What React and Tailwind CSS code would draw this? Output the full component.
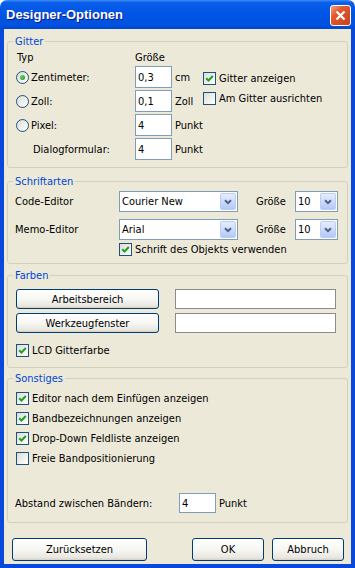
import React from "react";

const ui = "font-[family-name:'DejaVu_Sans_Condensed','Liberation_Sans',sans-serif]";

function Radio({ checked }) {
  return (
    <span className="flex h-[13px] w-[13px] shrink-0 items-center justify-center rounded-full border border-[#1c5180] bg-[linear-gradient(135deg,#dcdcd7,#ffffff)]">
      {checked && <span className="h-[5px] w-[5px] rounded-full bg-[radial-gradient(circle_at_35%_35%,#5fd35f,#1c9a1c)]" />}
    </span>
  );
}

function Check({ checked }) {
  return (
    <span className="flex h-[13px] w-[13px] shrink-0 items-center justify-center border border-[#1c5180] bg-[linear-gradient(135deg,#dcdcd7,#ffffff)]">
      {checked && (
        <svg width="9" height="9" viewBox="0 0 9 9">
          <path d="M1.2 4.2 L3.5 6.5 L7.8 2" fill="none" stroke="#21a121" strokeWidth="2" />
        </svg>
      )}
    </span>
  );
}

function CheckRow({ checked, children, className = "" }) {
  return (
    <div className={`flex h-[13px] items-center ${className}`}>
      <Check checked={checked} />
      <span className="ml-[3px] whitespace-nowrap">{children}</span>
    </div>
  );
}

function Field({ value, className = "" }) {
  return (
    <div className={`flex shrink-0 items-center border border-[#7f9db9] bg-white pl-[2px] ${className}`}>
      {value}
    </div>
  );
}

function Combo({ value, className = "" }) {
  return (
    <div className={`flex h-[21px] shrink-0 items-stretch border border-[#7f9db9] bg-white ${className}`}>
      <span className="flex flex-1 items-center pl-[2px] whitespace-nowrap">{value}</span>
      <span className="m-[1px] flex w-[16px] items-center justify-center rounded-[2px] border border-[#b9cdf8] bg-[linear-gradient(180deg,#e6eefd,#b4c8f6)]">
        <svg width="8" height="6" viewBox="0 0 8 6">
          <path d="M1 1.2 L4 4.2 L7 1.2" fill="none" stroke="#4d6185" strokeWidth="2" />
        </svg>
      </span>
    </div>
  );
}

function Btn({ children, className = "" }) {
  return (
    <button className={`shrink-0 rounded-[3px] border border-[#003c74] bg-[linear-gradient(180deg,#ffffff_0%,#f5f5f1_55%,#e8e7e0_88%,#d6d0c5_100%)] text-black ${className}`}>
      {children}
    </button>
  );
}

function Group({ title, className = "", children }) {
  return (
    <div className={`shrink-0 rounded-[3px] border border-[#d0d0bf] ${className}`}>
      <div className="-mt-[7px] ml-[5px] w-fit bg-[#ece9d8] px-[2px] leading-[13px] text-[#0046d5]">{title}</div>
      {children}
    </div>
  );
}

function GridRow({ label, value, unit }) {
  return (
    <div className="mt-[2px] flex h-[22px] items-center">
      <div className="flex w-[119px] items-center">{label}</div>
      <Field value={value} className="h-[22px] w-[37px]" />
      <span className="ml-[3px]">{unit}</span>
    </div>
  );
}

export default function App() {
  return (
    <div className={`flex h-[568px] w-[355px] flex-col text-[11px] leading-[13px] text-black ${ui}`}>
      {/* title bar */}
      <div className="flex h-[29px] shrink-0 items-center rounded-t-[7px] bg-[linear-gradient(180deg,#3c8df5_0%,#0a5eea_9%,#0055e5_45%,#0052e0_85%,#0146d0_100%)] pl-[6px] pr-[4px]">
        <span className="flex-1 font-[family-name:'Liberation_Sans',sans-serif] text-[13px] font-bold text-white [text-shadow:1px_1px_#0a1883]">
          Designer-Optionen
        </span>
        <span className="mt-[1px] flex h-[21px] w-[21px] items-center justify-center rounded-[3px] border border-white bg-[linear-gradient(135deg,#f0a080_0%,#e2572e_35%,#c8401a_100%)]">
          <svg width="11" height="11" viewBox="0 0 11 11">
            <path d="M1.5 1.5 L9.5 9.5 M9.5 1.5 L1.5 9.5" stroke="#fff" strokeWidth="2.2" />
          </svg>
        </span>
      </div>

      <div className="flex flex-1 flex-col border-x-4 border-b-4 border-[#0848db] bg-[#ece9d8] px-[3px]">
        <Group title="Gitter" className="mt-[12px] h-[127px]">
          <div className="flex pl-[8px]">
            <div className="w-[187px]">
              <div className="mt-[3px] flex h-[13px]">
                <span className="w-[119px] pl-[1px]">Typ</span>
                <span>Größe</span>
              </div>
              <GridRow
                label={<><Radio checked /><span className="ml-[2px]">Zentimeter:</span></>}
                value="0,3"
                unit="cm"
              />
              <GridRow label={<><Radio /><span className="ml-[2px]">Zoll:</span></>} value="0,1" unit="Zoll" />
              <GridRow label={<><Radio /><span className="ml-[2px]">Pixel:</span></>} value="4" unit="Punkt" />
              <GridRow label={<span className="pl-[17px]">Dialogformular:</span>} value="4" unit="Punkt" />
            </div>
            <div className="pt-[24px]">
              <CheckRow checked>Gitter anzeigen</CheckRow>
              <CheckRow className="mt-[7px]">Am Gitter ausrichten</CheckRow>
            </div>
          </div>
        </Group>

        <Group title="Schriftarten" className="mt-[13px] h-[83px]">
          <div className="pl-[7px]">
            <div className="mt-[3px] flex h-[21px] items-center">
              <span className="w-[104px]">Code-Editor</span>
              <Combo value="Courier New" className="w-[119px]" />
              <span className="ml-[18px] w-[39px]">Größe</span>
              <Combo value="10" className="w-[43px]" />
            </div>
            <div className="mt-[7px] flex h-[21px] items-center">
              <span className="w-[104px]">Memo-Editor</span>
              <Combo value="Arial" className="w-[119px]" />
              <span className="ml-[18px] w-[39px]">Größe</span>
              <Combo value="10" className="w-[43px]" />
            </div>
            <CheckRow checked className="mt-[3px] ml-[104px]">Schrift des Objekts verwenden</CheckRow>
          </div>
        </Group>

        <Group title="Farben" className="mt-[11px] h-[93px]">
          <div className="pl-[8px]">
            <div className="mt-[7px] flex h-[20px]">
              <Btn className="w-[143px]">Arbeitsbereich</Btn>
              <div className="ml-[16px] w-[161px] border border-[#8c8c8c] bg-white" />
            </div>
            <div className="mt-[4px] flex h-[20px]">
              <Btn className="w-[143px]">Werkzeugfenster</Btn>
              <div className="ml-[16px] w-[161px] border border-[#8c8c8c] bg-white" />
            </div>
            <CheckRow checked className="mt-[11px]">LCD Gitterfarbe</CheckRow>
          </div>
        </Group>

        <Group title="Sonstiges" className="mt-[10px] h-[145px]">
          <div className="pl-[8px]">
            <CheckRow checked className="mt-[7px]">Editor nach dem Einfügen anzeigen</CheckRow>
            <CheckRow checked className="mt-[7px]">Bandbezeichnungen anzeigen</CheckRow>
            <CheckRow checked className="mt-[7px]">Drop-Down Feldliste anzeigen</CheckRow>
            <CheckRow className="mt-[7px]">Freie Bandpositionierung</CheckRow>
            <div className="mt-[28px] flex h-[20px] items-center">
              <span className="w-[163px] pl-[0px] -ml-[1px]">Abstand zwischen Bändern:</span>
              <Field value="4" className="ml-[1px] h-[20px] w-[37px]" />
              <span className="ml-[3px]">Punkt</span>
            </div>
          </div>
        </Group>

        <div className="mt-[15px] mr-[4px] ml-[5px] flex h-[23px] shrink-0">
          <Btn className="w-[135px]">Zurücksetzen</Btn>
          <Btn className="ml-auto w-[72px]">OK</Btn>
          <Btn className="ml-[8px] w-[72px]">Abbruch</Btn>
        </div>
      </div>
    </div>
  );
}
